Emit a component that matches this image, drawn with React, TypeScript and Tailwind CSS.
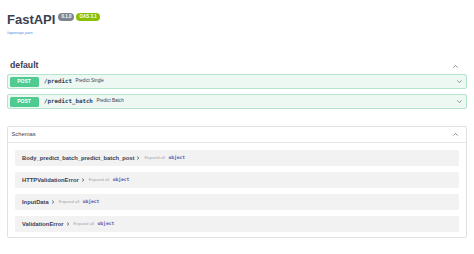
import { ReactNode } from 'react';

function Chevron({ up = false, className = '' }: { up?: boolean; className?: string }) {
  return (
    <svg viewBox="0 0 20 20" className={className} fill="none" stroke="currentColor" strokeWidth={2.2}>
      {up ? <polyline points="4,13 10,7 16,13" /> : <polyline points="4,7 10,13 16,7" />}
    </svg>
  );
}

function OpRow({ path, summary }: { path: string; summary: string }) {
  return (
    <div className="flex h-[15px] items-center rounded-[2px] border border-[#b4e4cd] bg-[#eef8f3] pl-[1.5px] pr-[3px]">
      <span className="flex h-[10px] w-[29px] items-center justify-center rounded-[1.5px] bg-[#4fcb92] text-[5px] font-bold text-white">
        POST
      </span>
      <span className="ml-[5.5px] font-['DejaVu_Sans_Mono',monospace] text-[5.8px] font-bold text-[#3b4151]">
        {path}
      </span>
      <span className="ml-[3.5px] text-[4.6px] text-[#3b4151]">{summary}</span>
      <Chevron className="ml-auto h-[7px] w-[7px] text-[#6b6f78]" />
    </div>
  );
}

function SchemaRow({ name, children }: { name: string; children?: ReactNode }) {
  return (
    <div className="flex h-[16px] items-center rounded-[1.5px] bg-[#f2f2f2] pl-[7px]">
      <span className="text-[5.8px] font-bold text-[#3b4151]">{name}</span>
      <svg viewBox="0 0 10 10" className="ml-[2px] h-[4px] w-[4px] text-[#3b4151]" fill="none" stroke="currentColor" strokeWidth={2}>
        <polyline points="3,1.5 7,5 3,8.5" />
      </svg>
      <span className="ml-[4px] text-[4.4px] text-[#a4a7ad]">Expand all</span>
      <span className="ml-[3.5px] font-['DejaVu_Sans_Mono',monospace] text-[4.6px] font-semibold text-[#55a]">object</span>
      {children}
    </div>
  );
}

export default function App() {
  return (
    <div className="h-[254px] w-[474px] overflow-hidden bg-white font-['Liberation_Sans',Arial,sans-serif] text-[#3b4151]">
      <div className="px-[7px] pt-[12px]">
        <div className="flex items-start">
          <h2 className="text-[13px] font-bold leading-[16px]">FastAPI</h2>
          <span className="ml-[3px] mt-[1px] flex h-[8px] items-center rounded-full bg-[#7d8492] px-[3px] text-[4.5px] font-bold text-white">
            0.1.0
          </span>
          <span className="ml-[2px] mt-[1px] flex h-[8px] items-center rounded-full bg-[#89bf04] px-[3px] text-[4.5px] font-bold text-white">
            OAS 3.1
          </span>
        </div>
        <div className="mt-[2px] text-[4.3px] leading-[6px] text-[#4990e2]">/openapi.json</div>

        <div className="mt-[24px] flex h-[12px] items-center pl-[3px] pr-[8px]">
          <span className="text-[8.7px] font-bold">default</span>
          <Chevron up className="ml-auto h-[7px] w-[7px] text-[#6b6f78]" />
        </div>

        <div className="mt-[2px] flex flex-col gap-[5px]">
          <OpRow path="/predict" summary="Predict Single" />
          <OpRow path="/predict_batch" summary="Predict Batch" />
        </div>

        <section className="mt-[17px] rounded-[2px] border border-[#e0e1e4]">
          <div className="flex h-[16px] items-center border-b border-[#e6e7e9] pl-[3.5px] pr-[7px]">
            <span className="text-[5.8px]">Schemas</span>
            <Chevron up className="ml-auto h-[7px] w-[7px] text-[#6b6f78]" />
          </div>
          <div className="flex flex-col gap-[6px] px-[7px] pb-[5px] pt-[7px]">
            <SchemaRow name="Body_predict_batch_predict_batch_post" />
            <SchemaRow name="HTTPValidationError" />
            <SchemaRow name="InputData" />
            <SchemaRow name="ValidationError" />
          </div>
        </section>
      </div>
    </div>
  );
}
